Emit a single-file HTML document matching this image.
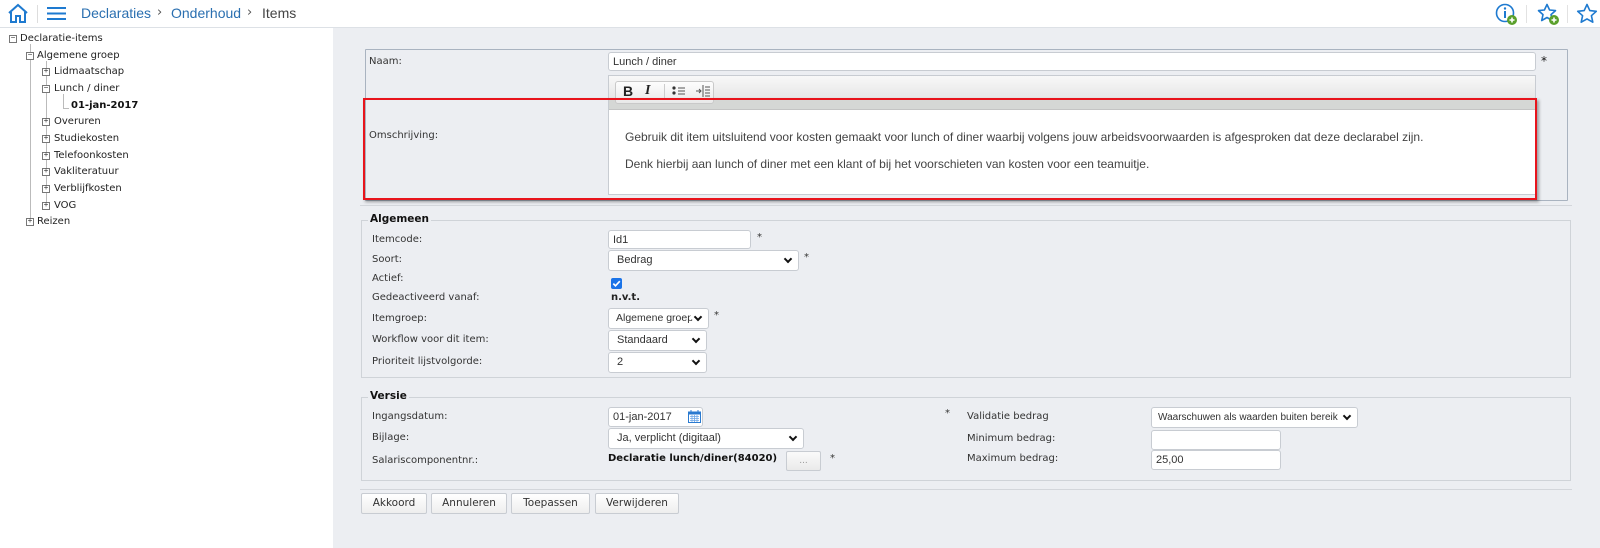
<!DOCTYPE html>
<html><head><meta charset="utf-8"><style>
*{box-sizing:border-box}
body{margin:0;width:1600px;height:548px;position:relative;overflow:hidden;background:#eceef2;font-family:"DejaVu Sans","Liberation Sans",sans-serif;font-size:10px;color:#333}
.a{position:absolute;white-space:nowrap}
#top{position:absolute;left:0;top:0;width:1600px;height:28px;background:#fff;border-bottom:1px solid #dde1e6}
#left{position:absolute;left:0;top:28px;width:333px;height:520px;background:#fff}
.crumb{font-family:"Liberation Sans",sans-serif;font-size:14px;color:#2a6fb0;top:5px}
.tb{position:absolute;width:8px;height:8px;border:1px solid #777;background:#fff;font-size:8px;line-height:6px;text-align:center;color:#333;font-family:"Liberation Mono",monospace}
.tl{color:#222;font-size:10px;line-height:13px}
.vl{position:absolute;border-left:1px solid #bbb}
.hl{position:absolute;border-top:1px solid #bbb}
.inp{position:absolute;background:#fff;border:1px solid #c8ccd2;border-radius:3px;font-family:"Liberation Sans",sans-serif;font-size:11px;color:#333;padding:2px 4px;line-height:14px;white-space:nowrap;overflow:hidden}
.sel{position:absolute;background:#fff;border:1px solid #c8ccd2;border-radius:3px;font-family:"Liberation Sans",sans-serif;font-size:11px;color:#333;padding:3px 18px 3px 8px;line-height:13px;white-space:nowrap;overflow:hidden}
.sel:after{content:"";position:absolute;right:7px;top:5px;width:4px;height:4px;border-right:2px solid #111;border-bottom:2px solid #111;transform:rotate(45deg);background:#fff;box-shadow:0 0 0 3px #fff}
.lbl{position:absolute;color:#333;font-size:10px;white-space:nowrap}
.fs{position:absolute;border:1px solid #cfd3d8}
.leg{position:absolute;font-weight:bold;font-size:10.5px;color:#111;background:#eceef2;padding:0 2px}
.btn{position:absolute;top:493px;height:21px;background:linear-gradient(#fff,#eee);border:1px solid #c8ccd2;border-radius:2px;font-size:10.5px;color:#333;text-align:center;line-height:19px}
</style></head><body>
<div id="top">
  <svg class="a" style="left:7px;top:3px" width="22" height="21" viewBox="0 0 22 21"><path d="M2 10 L11 2 L20 10" fill="none" stroke="#1e7ad0" stroke-width="2"/><path d="M4 9 V19 H9 V13 H13 V19 H18 V9" fill="none" stroke="#1e7ad0" stroke-width="2"/></svg>
  <div class="a" style="left:37px;top:5px;height:18px;border-left:1px solid #ddd"></div>
  <svg class="a" style="left:47px;top:7px" width="19" height="13"><rect x="0" y="0" width="19" height="2" fill="#1e7ad0"/><rect x="0" y="5.5" width="19" height="2" fill="#1e7ad0"/><rect x="0" y="11" width="19" height="2" fill="#1e7ad0"/></svg>
  <div class="a crumb" style="left:81px">Declaraties</div>
  <div class="a" style="left:157px;top:5px;font-size:13px;color:#555">›</div>
  <div class="a crumb" style="left:171px">Onderhoud</div>
  <div class="a" style="left:247px;top:5px;font-size:13px;color:#555">›</div>
  <div class="a crumb" style="left:262px;color:#444">Items</div>
  <svg class="a" style="left:1495px;top:3px" width="24" height="24"><circle cx="10" cy="10" r="8.5" fill="none" stroke="#1e7ad0" stroke-width="1.6"/><rect x="9" y="8" width="2" height="7" fill="#1e7ad0"/><circle cx="10" cy="5.5" r="1.2" fill="#1e7ad0"/><circle cx="17" cy="17" r="5" fill="#5aa02c"/><path d="M14.5 17 H19.5 M17 14.5 V19.5" stroke="#fff" stroke-width="1.6"/></svg>
  <div class="a" style="left:1526px;top:5px;height:18px;border-left:1px solid #e2e2e2"></div>
  <svg class="a" style="left:1537px;top:3px" width="24" height="24"><path d="M10 1.5 L12.6 7 L18.5 7.6 L14 11.6 L15.3 17.5 L10 14.5 L4.7 17.5 L6 11.6 L1.5 7.6 L7.4 7 Z" fill="none" stroke="#1e7ad0" stroke-width="1.6" stroke-linejoin="round"/><circle cx="17" cy="17" r="5" fill="#5aa02c"/><path d="M14.5 17 H19.5 M17 14.5 V19.5" stroke="#fff" stroke-width="1.6"/></svg>
  <div class="a" style="left:1567px;top:5px;height:18px;border-left:1px solid #e2e2e2"></div>
  <svg class="a" style="left:1576px;top:3px" width="22" height="22"><path d="M11 1.5 L13.8 7.6 L20.3 8.3 L15.4 12.7 L16.8 19.2 L11 15.9 L5.2 19.2 L6.6 12.7 L1.7 8.3 L8.2 7.6 Z" fill="none" stroke="#1e7ad0" stroke-width="1.6" stroke-linejoin="round"/></svg>
</div>
<div id="left">
  <div class="vl" style="left:30px;top:16px;height:179px"></div>
  <div class="vl" style="left:46px;top:33px;height:146px"></div>
  <div class="vl" style="left:63px;top:66px;height:14px"></div>
  <div class="hl" style="left:63px;top:80px;width:6px"></div>
  <div class="tb" style="left:9px;top:7px">−</div><div class="a tl" style="left:20px;top:4px">Declaratie-items</div>
  <div class="tb" style="left:26px;top:24px">−</div><div class="a tl" style="left:37px;top:21px">Algemene groep</div>
  <div class="tb" style="left:42px;top:40px">+</div><div class="a tl" style="left:54px;top:37px">Lidmaatschap</div>
  <div class="tb" style="left:42px;top:57px">−</div><div class="a tl" style="left:54px;top:54px">Lunch / diner</div>
  <div class="a tl" style="left:71px;top:71px;font-weight:bold;color:#111">01-jan-2017</div>
  <div class="tb" style="left:42px;top:90px">+</div><div class="a tl" style="left:54px;top:87px">Overuren</div>
  <div class="tb" style="left:42px;top:107px">+</div><div class="a tl" style="left:54px;top:104px">Studiekosten</div>
  <div class="tb" style="left:42px;top:124px">+</div><div class="a tl" style="left:54px;top:121px">Telefoonkosten</div>
  <div class="tb" style="left:42px;top:140px">+</div><div class="a tl" style="left:54px;top:137px">Vakliteratuur</div>
  <div class="tb" style="left:42px;top:157px">+</div><div class="a tl" style="left:54px;top:154px">Verblijfkosten</div>
  <div class="tb" style="left:42px;top:174px">+</div><div class="a tl" style="left:54px;top:171px">VOG</div>
  <div class="tb" style="left:26px;top:190px">+</div><div class="a tl" style="left:37px;top:187px">Reizen</div>
</div>

<div class="a" style="left:365px;top:49px;width:1203px;height:152px;border:1px solid #a9b3c0;border-radius:1px"></div>
<div class="lbl" style="left:369px;top:56px">Naam:</div>
<div class="inp" style="left:608px;top:52px;width:928px;height:19px">Lunch / diner</div>
<div class="a" style="left:1541px;top:54px;font-size:12px;color:#111">*</div>
<div class="a" style="left:608px;top:75px;width:928px;height:120px;border:1px solid #c8ccd2;background:#fff"></div>
<div class="a" style="left:609px;top:76px;width:926px;height:23px;background:linear-gradient(#f8f8f8,#e6e6e6)"></div>
<div class="a" style="left:609px;top:98px;width:926px;height:12px;background:#d5d7d5;border-bottom:1px solid #c4c4c4"></div>
<div class="a" style="left:615px;top:81px;width:99px;height:23px;border:1px solid #c9c9c9;border-radius:3px;background:linear-gradient(#fdfdfd,#e9e9e9)"></div>
<div class="a" style="left:623px;top:83px;font-family:'Liberation Sans';font-weight:bold;font-size:14px;color:#222">B</div>
<div class="a" style="left:645px;top:83px;font-family:'Liberation Serif';font-style:italic;font-weight:bold;font-size:14px;color:#222">I</div>
<div class="a" style="left:664px;top:84px;height:16px;border-left:1px solid #ccc"></div>
<svg class="a" style="left:672px;top:86px" width="14" height="10"><circle cx="2" cy="2" r="1.6" fill="#333"/><circle cx="2" cy="7" r="1.6" fill="#333"/><path d="M6 2H13M6 5H13M6 8H13" stroke="#555" stroke-width="1"/></svg>
<svg class="a" style="left:696px;top:85px" width="14" height="12"><path d="M0 6H5M3 4L5 6L3 8M7 0V12M9 2H14M9 5H14M9 8H14M9 11H14" stroke="#555" stroke-width="1" fill="none"/></svg>
<div class="a" style="left:625px;top:130px;font-family:'Liberation Sans',sans-serif;font-size:12px;color:#444">Gebruik dit item uitsluitend voor kosten gemaakt voor lunch of diner waarbij volgens jouw arbeidsvoorwaarden is afgesproken dat deze declarabel zijn.</div>
<div class="a" style="left:625px;top:157px;font-family:'Liberation Sans',sans-serif;font-size:12px;color:#444">Denk hierbij aan lunch of diner met een klant of bij het voorschieten van kosten voor een teamuitje.</div>
<div class="lbl" style="left:369px;top:130px">Omschrijving:</div>
<div class="a" style="left:363px;top:98px;width:1174px;height:102px;border:2px solid #e8141c;box-shadow:2px 2px 3px rgba(0,0,0,.35)"></div>
<div class="a" style="left:360px;top:205px;width:1212px;border-top:1px solid #d3d6db"></div>

<div class="fs" style="left:361px;top:220px;width:1210px;height:158px"></div>
<div class="leg" style="left:368px;top:213px">Algemeen</div>
<div class="lbl" style="left:372px;top:234px">Itemcode:</div>
<div class="inp" style="left:608px;top:230px;width:143px;height:19px">Id1</div>
<div class="a" style="left:757px;top:232px;font-size:10px">*</div>
<div class="lbl" style="left:372px;top:254px">Soort:</div>
<div class="sel" style="left:608px;top:250px;width:191px;height:21px">Bedrag</div>
<div class="a" style="left:804px;top:252px;font-size:10px">*</div>
<div class="lbl" style="left:372px;top:273px">Actief:</div>
<div class="a" style="left:611px;top:278px;width:11px;height:11px;background:#1a73e8;border-radius:2px"><svg width="11" height="11" style="display:block"><path d="M2.3 5.6L4.5 7.8L8.8 3.2" stroke="#fff" stroke-width="1.7" fill="none"/></svg></div>
<div class="lbl" style="left:372px;top:292px">Gedeactiveerd vanaf:</div>
<div class="a" style="left:611px;top:292px;font-weight:bold;font-size:10px;color:#222">n.v.t.</div>
<div class="lbl" style="left:372px;top:313px">Itemgroep:</div>
<div class="sel" style="left:608px;top:308px;width:101px;height:21px;padding-left:7px;padding-right:14px;font-size:10.5px">Algemene groep</div>
<div class="a" style="left:714px;top:310px;font-size:10px">*</div>
<div class="lbl" style="left:372px;top:334px">Workflow voor dit item:</div>
<div class="sel" style="left:608px;top:330px;width:99px;height:21px">Standaard</div>
<div class="lbl" style="left:372px;top:356px">Prioriteit lijstvolgorde:</div>
<div class="sel" style="left:608px;top:352px;width:99px;height:21px">2</div>

<div class="fs" style="left:361px;top:397px;width:1210px;height:84px"></div>
<div class="leg" style="left:368px;top:390px">Versie</div>
<div class="lbl" style="left:372px;top:411px">Ingangsdatum:</div>
<div class="inp" style="left:608px;top:407px;width:95px;height:20px">01-jan-2017</div>
<svg class="a" style="left:688px;top:410px" width="13" height="13"><rect x="0.5" y="2" width="12" height="10.5" fill="#fff" stroke="#2a7ad0"/><rect x="0.5" y="2" width="12" height="2.5" fill="#2a7ad0"/><path d="M3 0V3M10 0V3" stroke="#2a7ad0"/><path d="M2 6.5H11M2 8.5H11M2 10.5H11M4 5V12M6.5 5V12M9 5V12" stroke="#6aa5e6" stroke-width=".8"/></svg>
<div class="lbl" style="left:372px;top:432px">Bijlage:</div>
<div class="sel" style="left:608px;top:428px;width:196px;height:21px">Ja, verplicht (digitaal)</div>
<div class="lbl" style="left:372px;top:455px">Salariscomponentnr.:</div>
<div class="a" style="left:608px;top:453px;font-weight:bold;font-size:10px;color:#111">Declaratie lunch/diner(84020)</div>
<div class="a" style="left:786px;top:451px;width:35px;height:20px;background:linear-gradient(#fafafa,#eaeaea);border:1px solid #c8ccd2;border-radius:2px;font-size:9px;color:#999;text-align:center;line-height:18px">...</div>
<div class="a" style="left:830px;top:453px;font-size:10px">*</div>
<div class="a" style="left:945px;top:408px;font-size:10px">*</div>
<div class="lbl" style="left:967px;top:411px">Validatie bedrag</div>
<div class="sel" style="left:1151px;top:407px;width:207px;height:21px;padding-left:6px;font-size:10px">Waarschuwen als waarden buiten bereik</div>
<div class="lbl" style="left:967px;top:433px">Minimum bedrag:</div>
<div class="inp" style="left:1151px;top:430px;width:130px;height:20px"></div>
<div class="lbl" style="left:967px;top:453px">Maximum bedrag:</div>
<div class="inp" style="left:1151px;top:450px;width:130px;height:20px">25,00</div>

<div class="a" style="left:360px;top:489px;width:1212px;border-top:1px solid #d3d6db"></div>
<div class="btn" style="left:361px;width:66px">Akkoord</div>
<div class="btn" style="left:431px;width:76px">Annuleren</div>
<div class="btn" style="left:511px;width:79px">Toepassen</div>
<div class="btn" style="left:595px;width:84px">Verwijderen</div>
</body></html>
